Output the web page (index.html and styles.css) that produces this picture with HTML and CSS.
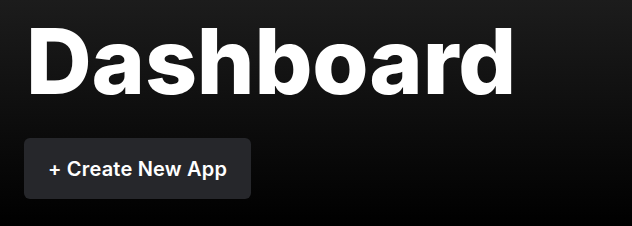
FILE: index.html
```html
<!DOCTYPE html>
<html>
<head>
<meta charset="utf-8">
<link rel="stylesheet" href="styles.css">
</head>
<body>
<main class="page">
  <h1 class="title">Dashboard</h1>
  <button class="create-btn">+ Create New App</button>
</main>
</body>
</html>
```
FILE: styles.css
```css
html, body {
  margin: 0;
  height: 100%;
}
body {
  background: linear-gradient(180deg, #1c1c1c 0%, #000000 100%);
  font-family: Inter, "Noto Sans", sans-serif;
  color: #ffffff;
}
.page {
  display: flex;
  flex-direction: column;
  align-items: flex-start;
  padding: 0 24px;
}
.title {
  margin: 0;
  padding-top: 6px;
  padding-left: 2px;
  font-size: 91px;
  font-weight: 800;
  line-height: 110px;
  letter-spacing: -0.2px;
}
.create-btn {
  margin-top: 22px;
  width: 227px;
  height: 61px;
  border: none;
  border-radius: 6px;
  background: #26272b;
  color: #ffffff;
  font-family: Inter, "Noto Sans", sans-serif;
  font-size: 20px;
  font-weight: 600;
  letter-spacing: 0.2px;
  padding: 0;
  cursor: pointer;
}
```
